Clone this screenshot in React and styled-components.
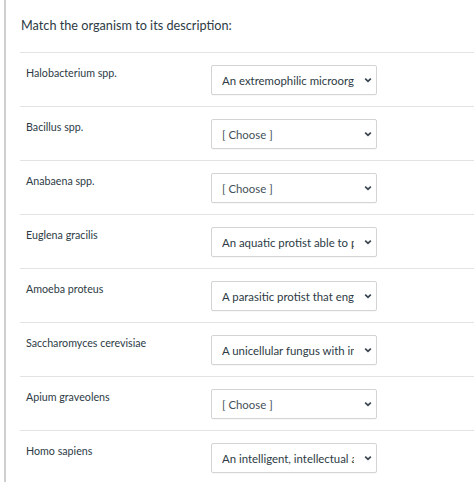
import styled, { createGlobalStyle } from 'styled-components';

const GlobalStyle = createGlobalStyle`
  body {
    margin: 0;
    background: #fff;
    font-family: Lato, "Open Sans", sans-serif;
  }
`;

// Outer question panel, with its grey rule down the left side
const Panel = styled.div`
  margin-left: 4px;
  border-left: 2px solid #cfcfcf;
  padding-left: 14px;
  height: 482px;
  overflow: hidden;
`;

const Title = styled.div`
  height: 52px;
  display: flex;
  align-items: center;
  padding-left: 1px;
  padding-bottom: 3px;
  box-sizing: border-box;
  font-size: 12.7px;
  color: #2d3b45;
`;

const Row = styled.div`
  display: grid;
  grid-template-columns: 185px 166px;
  align-items: start;
  height: 54px;
  box-sizing: border-box;
  border-top: 1px solid #e3e3e3;
  padding-left: 6px;
`;

const Label = styled.div`
  padding-top: 13px;
  font-size: 10.7px;
  color: #2d3b45;
`;

const SelectBox = styled.div`
  margin-top: 12px;
  height: 30px;
  box-sizing: border-box;
  border: 1px solid #d4d4d4;
  border-radius: 2px;
  display: flex;
  align-items: center;
  padding: 0 3px 0 10px;
  font-size: 11.4px;
  color: ${props => (props.$empty ? '#44525a' : '#2d3b45')};
  background: #fff;
  box-shadow: 0 1px 1px rgba(0, 0, 0, 0.03);
`;

const SelectText = styled.span`
  flex: 1;
  white-space: nowrap;
  overflow: hidden;
`;

const Chevron = () => (
  <svg width="10" height="10" viewBox="0 0 10 10" style={{ flexShrink: 0, marginLeft: 9 }}>
    <path d="M2.2 3.6 L5 6.4 L7.8 3.6" fill="none" stroke="#3a4550" strokeWidth="1.7" />
  </svg>
);

const rows = [
  ['Halobacterium spp.', 'An extremophilic microorganism'],
  ['Bacillus spp.', null],
  ['Anabaena spp.', null],
  ['Euglena gracilis', 'An aquatic protist able to photosynthesize'],
  ['Amoeba proteus', 'A parasitic protist that engulfs'],
  ['Saccharomyces cerevisiae', 'A unicellular fungus with important uses'],
  ['Apium graveolens', null],
  ['Homo sapiens', 'An intelligent, intellectual animal'],
];

export default function App() {
  return (
    <>
      <GlobalStyle />
      <Panel>
        <Title>Match the organism to its description:</Title>
        {rows.map(([name, answer]) => (
          <Row key={name}>
            <Label>{name}</Label>
            <SelectBox $empty={!answer}>
              <SelectText>{answer || '[ Choose ]'}</SelectText>
              <Chevron />
            </SelectBox>
          </Row>
        ))}
      </Panel>
    </>
  );
}
